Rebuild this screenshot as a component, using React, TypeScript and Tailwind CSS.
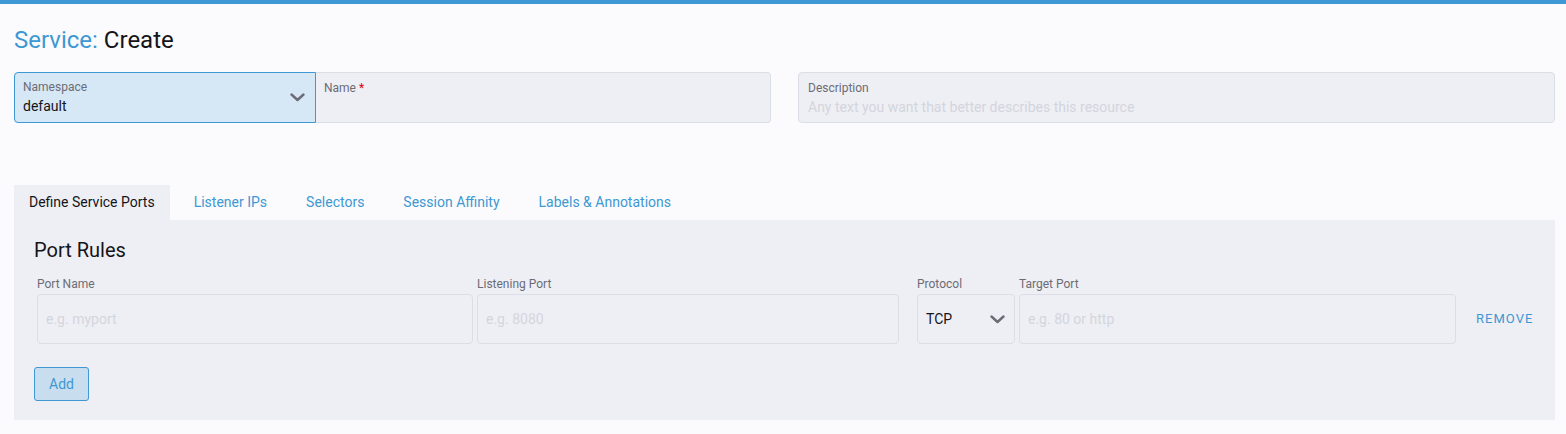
const tabs = ["Define Service Ports", "Listener IPs", "Selectors", "Session Affinity", "Labels & Annotations"];

const Chevron = () => (
  <svg width="15" height="9" viewBox="0 0 15 9" className="shrink-0">
    <path d="M1.5 1.5 L7.5 7 L13.5 1.5" fill="none" stroke="#6c6c76" strokeWidth="2.4" strokeLinecap="round" strokeLinejoin="round" />
  </svg>
);

const PortInput = ({ width, placeholder }: { width: string; placeholder: string }) => (
  <div className={`${width} h-[50px] rounded-[4px] border border-[#dcdee7] bg-[#eeeff4] flex items-center px-[8px] text-[14px] text-[#d3d5dd]`}>
    {placeholder}
  </div>
);

export default function App() {
  return (
    <div className="min-h-[434px] bg-[#fbfbfd] text-[#141419] font-['Roboto','Liberation_Sans',sans-serif]">
      <div className="h-[4px] bg-[#3d98d3]" />
      <div className="pl-[14px] pr-[11px]">
        <h1 className="mt-[21px] text-[24px] leading-[30px]">
          <span className="text-[#3d98d3]">Service:</span> Create
        </h1>

        {/* Namespace / Name / Description */}
        <div className="mt-[17px] flex">
          <div className="w-[302px] h-[51px] rounded-l-[4px] border border-[#3d98d3] bg-[#d6e8f5] flex items-center pl-[8px] pr-[10px]">
            <div className="flex-1">
              <div className="text-[12px] leading-[15px] text-[#6c6c76]">Namespace</div>
              <div className="text-[14px] leading-[18px] mt-[2px]">default</div>
            </div>
            <Chevron />
          </div>
          <div className="w-[455px] h-[51px] rounded-r-[4px] border border-l-0 border-[#dcdee7] bg-[#eeeff4] pl-[8px] pt-[8px]">
            <div className="text-[12px] leading-[15px] text-[#6c6c76]">
              Name <span className="text-[#e0000b]">*</span>
            </div>
          </div>
          <div className="ml-[27px] flex-1 h-[51px] rounded-[4px] border border-[#dcdee7] bg-[#eeeff4] pl-[9px] pt-[8px]">
            <div className="text-[12px] leading-[15px] text-[#6c6c76]">Description</div>
            <div className="text-[14px] leading-[18px] mt-[2px] text-[#d3d5dd]">Any text you want that better describes this resource</div>
          </div>
        </div>

        {/* Tabs */}
        <div className="mt-[62px] flex h-[35px]">
          {tabs.map((t, i) => (
            <div
              key={t}
              className={`px-[15px] flex items-center text-[14px] ${i === 0 ? "bg-[#eeeff4] text-[#141419] mr-[9px]" : "text-[#3d98d3] mr-[9px]"}`}
            >
              {t}
            </div>
          ))}
        </div>

        {/* Panel */}
        <div className="bg-[#eeeff4] h-[200px] pl-[20px] pt-[18px]">
          <h2 className="text-[20px] leading-[24px]">Port Rules</h2>
          <div className="ml-[3px] mt-[14px] flex items-end">
            <div className="w-[436px]">
              <div className="text-[12px] leading-[16px] text-[#6c6c76] mb-[2px]">Port Name</div>
              <PortInput width="w-[436px]" placeholder="e.g. myport" />
            </div>
            <div className="ml-[4px] w-[422px]">
              <div className="text-[12px] leading-[16px] text-[#6c6c76] mb-[2px]">Listening Port</div>
              <PortInput width="w-[422px]" placeholder="e.g. 8080" />
            </div>
            <div className="ml-[18px] w-[98px]">
              <div className="text-[12px] leading-[16px] text-[#6c6c76] mb-[2px]">Protocol</div>
              <div className="w-[98px] h-[50px] rounded-[4px] border border-[#dcdee7] bg-[#eeeff4] flex items-center justify-between pl-[8px] pr-[9px] text-[14px]">
                TCP
                <Chevron />
              </div>
            </div>
            <div className="ml-[4px] w-[437px]">
              <div className="text-[12px] leading-[16px] text-[#6c6c76] mb-[2px]">Target Port</div>
              <PortInput width="w-[437px]" placeholder="e.g. 80 or http" />
            </div>
            <div className="ml-[20px] h-[50px] flex items-center text-[13px] tracking-[0.08em] text-[#3d98d3]">REMOVE</div>
          </div>
          <button className="mt-[23px] w-[55px] h-[34px] rounded-[3px] border border-[#3d98d3] bg-[#c8deef] text-[14px] text-[#3d98d3]">
            Add
          </button>
        </div>
      </div>
    </div>
  );
}
